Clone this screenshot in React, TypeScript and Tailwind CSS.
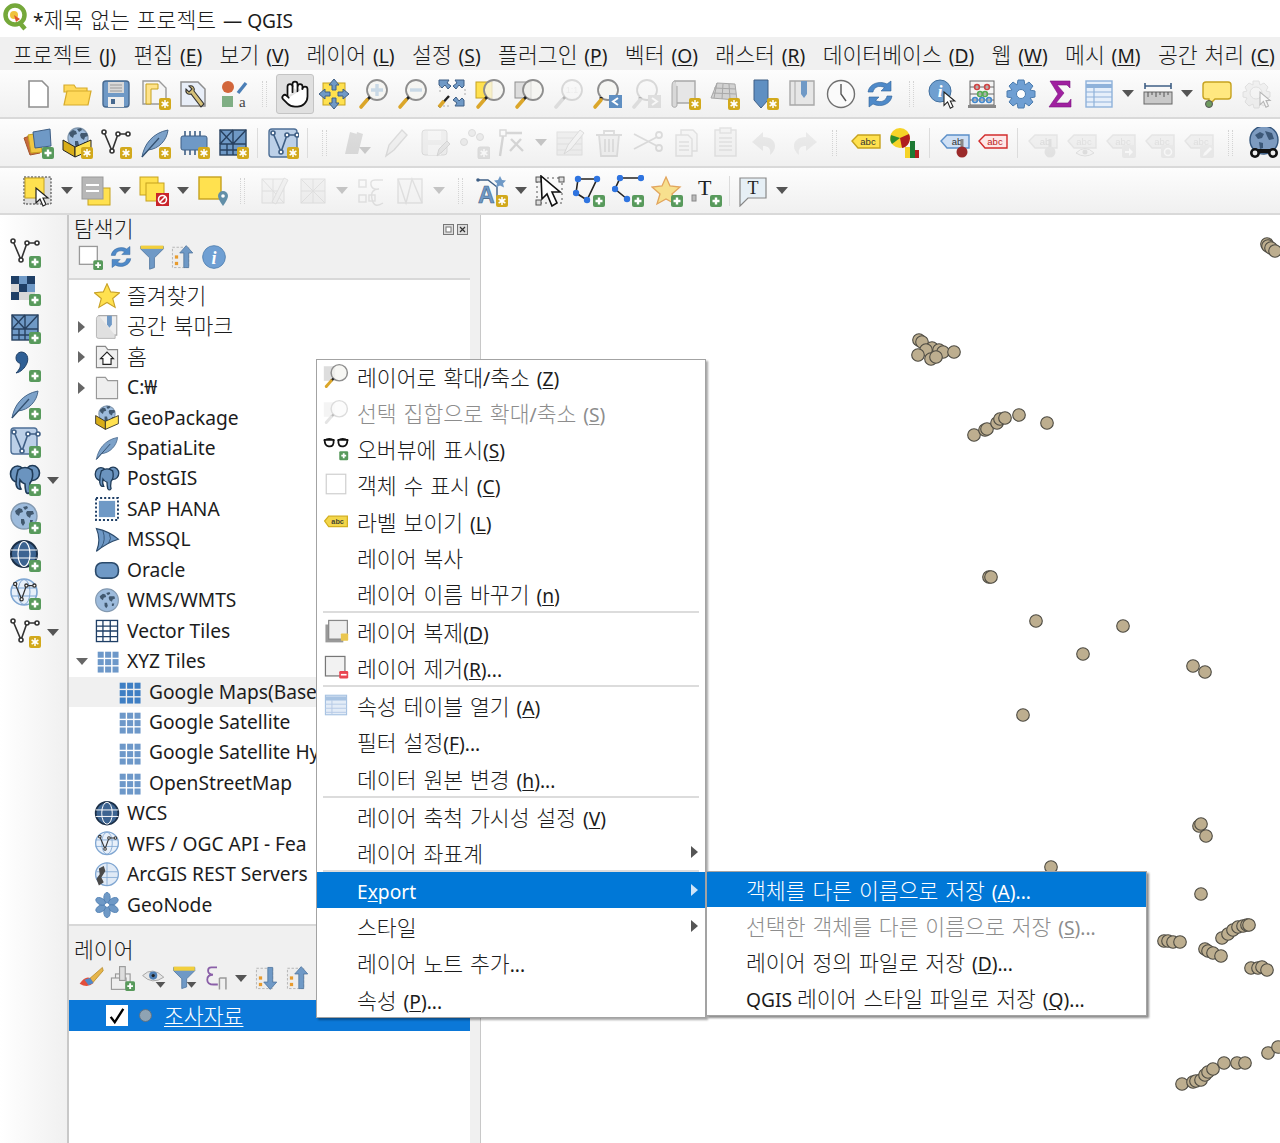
import type { ReactNode } from 'react';
import { Hand } from 'lucide-react';

const BL = '#6f99c6';
const BD = '#3f5f85';
const YL = '#ffe14f';
const YD = '#c6a21f';

const Plus = () => (
  <g>
    <rect x="20" y="20" width="12" height="12" rx="2" fill="#589a5c" />
    <path d="M26 22.5v7M22.5 26h7" stroke="#fff" strokeWidth="2.4" />
  </g>
);
const Star = () => (
  <g>
    <rect x="20" y="20" width="12" height="12" rx="2" fill="#d2a91c" />
    <path d="M26 22v8M22.6 24l6.8 4M22.6 28l6.8-4" stroke="#fff" strokeWidth="1.5" />
  </g>
);
const Mag = ({ children, x = 20, y = 12, r = 10 }: { children?: ReactNode; x?: number; y?: number; r?: number }) => (
  <g>
    {children}
    <circle cx={x} cy={y} r={r} fill="#f4f4f0" fillOpacity=".75" stroke="#8e8e8e" strokeWidth="1.8" />
    <path d={`M${x - r * 0.7} ${y + r * 0.7}L10 22`} stroke="#222" strokeWidth="2.8" />
    <path d="M10 22L4 29" stroke="#dba62a" strokeWidth="3.6" strokeLinecap="round" />
  </g>
);
const Globe = ({ cx = 16, cy = 15, r = 13 }: { cx?: number; cy?: number; r?: number }) => (
  <g>
    <circle cx={cx} cy={cy} r={r} fill="#9dbbdc" stroke="#8399b0" strokeWidth="1.4" />
    <path
      d={`M${cx - 9} ${cy - 5}l4-3 3 1 1 3-3 1-1 3-3-2zM${cx - 1} ${cy - 9}l4-1 1 2-3 2zM${cx + 3} ${cy - 5}l6 0 1 3-3 1-1 3-3-2-1-3zM${cx - 3} ${cy + 3}l3 0 1 4-2 3-2-3zM${cx + 6} ${cy + 4}l3 0-1 3-2 0z`}
      fill="#41586f"
    />
  </g>
);
const VNodes = ({ color = '#333' }: { color?: string }) => (
  <g fill="#fff" stroke={color} strokeWidth="1.6">
    <path d="M4 5L12 24 18 7H28" fill="none" />
    <circle cx="4" cy="5" r="2" />
    <circle cx="12" cy="24" r="2" />
    <circle cx="18" cy="7" r="2" />
    <circle cx="28" cy="7" r="2" />
  </g>
);
const Feather = () => (
  <g>
    <path d="M3 30C5 18 13 6 29 3 28 13 20 22 9 23z" fill="#7da2c9" stroke="#48688c" strokeWidth="1" />
    <path d="M3 30L20 11" stroke="#33506f" strokeWidth="1.2" />
  </g>
);
const Mesh = () => (
  <g fill="none" stroke="#27405f" strokeWidth="1.4">
    <rect x="3" y="3" width="26" height="25" fill={BL} />
    <path d="M3 3l13 14M16 3L3 17M16 3v25M3 17h26M3 23h26M10 17v11M29 3L16 17" />
  </g>
);
const XyzGrid = ({ color = '#6d98c9' }: { color?: string }) => (
  <g fill={color}>
    {[4, 12, 20].map((y) => [4, 12, 20].map((x) => <rect key={`${x}-${y}`} x={x} y={y} width="6.5" height="6.5" />))}
  </g>
);
const Tag = ({ fill, stroke, text = 'abc', color = '#333' }: { fill: string; stroke: string; text?: string; color?: string }) => (
  <g>
    <path d="M2 14L8 8H30V21H8z" fill={fill} stroke={stroke} strokeWidth="1.4" />
    <text x="18" y="18" fontSize="9.5" textAnchor="middle" fill={color} fontFamily="Liberation Sans">
      {text}
    </text>
  </g>
);
const Cursor = ({ x = 0, y = 0, s = 1 }: { x?: number; y?: number; s?: number }) => (
  <path
    transform={`translate(${x} ${y}) scale(${s})`}
    d="M0 0L0 15 4 11 7 18 10 16.5 7 10H12z"
    fill="#fff"
    stroke="#222"
    strokeWidth="1.2"
  />
);
const Elephant = () => (
  <g fill="#6b94bf" stroke="#1f3b58" strokeWidth="1.6">
    <ellipse cx="8.5" cy="10" rx="7" ry="8" />
    <ellipse cx="23.5" cy="9" rx="7" ry="7.5" />
    <path d="M9 6Q16 1 23 6 25 14 21 19 20 25 21 28 19 31 17 28 16 24 16 20 13 19 11 16 10 22 12 25 8 26 7 20 7 12 9 6z" />
  </g>
);

const icons: Record<string, ReactNode> = {
  newFile: <path d="M7 3H20L26 9V29H7z" fill="#fff" stroke="#8f8f8f" strokeWidth="1.6" />,
  open: (
    <g stroke="#d6ab2c" strokeWidth="1.2" fill="#ffd95a">
      <path d="M3 7h10l2 3h11v4H3z" />
      <path d="M3 27L6 13H30L27 27z" />
    </g>
  ),
  save: (
    <g>
      <rect x="3" y="3" width="26" height="26" rx="3" fill={BL} stroke="#47698f" strokeWidth="1.4" />
      <rect x="8" y="4" width="16" height="11" fill="#d9d9d9" />
      <path d="M10 7h12M10 10h12M10 13h12" stroke="#999" />
      <rect x="8" y="19" width="16" height="10" fill="#eee" />
      <rect x="11" y="21" width="4" height="5" fill="#47698f" />
    </g>
  ),
  projProps: (
    <g>
      <path d="M4 3H20L27 10V26H4z" fill="#f5f5f5" stroke="#9a9a9a" strokeWidth="1.4" />
      <path d="M7 6h12v5h-7v15H7z" fill="#ffe38a" stroke="#c6a21f" />
      <Star />
    </g>
  ),
  wrench: (
    <g>
      <path d="M3 4H20L27 11V28H3z" fill="#e8eef8" stroke="#8f8f8f" strokeWidth="1.5" />
      <path d="M11 8C15 7 17 10 16 13L26 26 23 29 13 16C10 17 7 15 8 11L11 14 14 11z" fill="#d7c27a" stroke="#333" strokeWidth="1.1" />
    </g>
  ),
  styleMgr: (
    <g>
      <circle cx="11" cy="9" r="6" fill="#d2663b" />
      <path d="M21 15L29 5" stroke="#4b7fb7" strokeWidth="3.4" />
      <rect x="5" y="18" width="11" height="11" fill="#7fae84" />
      <text x="22" y="29" fontSize="15" fill="#444" fontFamily="Liberation Serif">a</text>
    </g>
  ),
  panSel: (
    <g>
      <rect x="5" y="5" width="22" height="22" fill={YL} stroke={YD} />
      <path
        d="M16 1l5 6h-3v5h-4V7h-3zM16 31l5-6h-3v-5h-4v5h-3zM1 16l6-5v3h5v4H7v3zM31 16l-6-5v3h-5v4h5v3z"
        fill={BL}
        stroke={BD}
      />
    </g>
  ),
  zoomIn: (
    <Mag>
      <path d="M20 6v12M14 12h12" stroke="#4a86c5" strokeWidth="3.4" />
    </Mag>
  ),
  zoomOut: (
    <Mag>
      <path d="M14 12h12" stroke="#4a86c5" strokeWidth="3.4" />
    </Mag>
  ),
  zoomFull: (
    <g>
      <path d="M4 2h10l-2 3 4 3-3 3-3-4-3 3-3-3zM29 2h-9l2 3-4 3 3 3 3-4 3 3 2-2zM29 28h-9l2-3-4-3 3-3 3 4 3-3 2 2z" fill={BL} stroke={BD} />
      <path d="M5 8v8M30 11v8M8 28h8" stroke="#aaa" strokeDasharray="2 2" />
      <path d="M14 18L4 29" stroke="#222" strokeWidth="2.4" />
      <path d="M9 23L4 29" stroke="#dba62a" strokeWidth="3.6" />
    </g>
  ),
  zoomSel: (
    <Mag>
      <rect x="2" y="4" width="16" height="16" fill={YL} stroke={YD} />
    </Mag>
  ),
  zoomLayer: (
    <Mag>
      <rect x="2" y="4" width="16" height="16" fill="#ddd" stroke="#8f8f8f" />
    </Mag>
  ),
  zoom11: (
    <Mag>
      <text x="20" y="15" fontSize="9" textAnchor="middle" fill="#666" fontFamily="Liberation Sans">1:1</text>
    </Mag>
  ),
  zoomLast: (
    <g>
      <Mag x={17} y={12} />
      <rect x="18" y="17" width="13" height="13" fill="#5f8fc2" />
      <path d="M27 20l-5 3.5 5 3.5" fill="none" stroke="#fff" strokeWidth="2" />
    </g>
  ),
  zoomNext: (
    <g>
      <Mag x={17} y={12} />
      <rect x="18" y="17" width="13" height="13" fill="#aaa" />
      <path d="M22 20l5 3.5-5 3.5" fill="none" stroke="#fff" strokeWidth="2" />
    </g>
  ),
  mapNew: (
    <g>
      <path d="M6 3H26V25H6z" fill="#e6e6e6" stroke="#a8a8a8" strokeWidth="1.4" />
      <path d="M6 3C3 3 3 7 3 9V27C3 30 8 30 8 27V8" fill="#d8d8d8" stroke="#a8a8a8" />
      <Star />
    </g>
  ),
  map3d: (
    <g>
      <path d="M9 5L27 6 29 22 3 20z" fill="#d2d2d2" stroke="#a8a8a8" />
      <path d="M9 5L6 20M15 6L14 21M21 6L22 21M6 10L28 11M5 15L28 16" stroke="#a8a8a8" fill="none" />
      <Star />
    </g>
  ),
  bmNew: (
    <g>
      <path d="M7 2H21V22L14 30 7 22z" fill="#5f8fc2" stroke="#3f5f85" />
      <Star />
    </g>
  ),
  bmShow: (
    <g>
      <path d="M4 3H28V27H4z" fill="#e6e6e6" stroke="#a8a8a8" strokeWidth="1.4" />
      <path d="M9 3v24" stroke="#a8a8a8" />
      <path d="M15 3h6v13l-3 4-3-4z" fill="#6f99c6" />
    </g>
  ),
  clock: (
    <g fill="none" stroke="#555">
      <circle cx="16" cy="16" r="13.5" fill="#fafafa" stroke="#707070" strokeWidth="1.4" />
      <path d="M16 6v10l5 7" strokeWidth="1.4" />
    </g>
  ),
  refresh: (
    <g fill="#4f8ac9" stroke="#2f6297" strokeWidth=".6">
      <path d="M4 14C5 6 15 2 23 6L27 3V13H17L20.5 9.5C15 7 10 9 9 14z" />
      <path d="M28 18C27 26 17 30 9 26L5 29V19H15L11.5 22.5C17 25 22 23 23 18z" />
    </g>
  ),
  identify: (
    <g>
      <circle cx="13" cy="13" r="11" fill="#6f9fd0" stroke="#42709f" />
      <text x="13" y="19" fontSize="17" textAnchor="middle" fill="#fff" fontStyle="italic" fontWeight="bold" fontFamily="Liberation Serif">i</text>
      <Cursor x={17} y={14} s={0.9} />
    </g>
  ),
  abacus: (
    <g fill="none" stroke="#666">
      <rect x="4" y="3" width="24" height="24" fill="#f4f4f4" />
      <path d="M4 9h24M4 16h24M4 22h24" />
      <g strokeWidth="1.6">
        <circle cx="11" cy="9" r="2.4" stroke="#c44" />
        <circle cx="21" cy="9" r="2.4" stroke="#c44" />
        <circle cx="14" cy="16" r="2.4" stroke="#5a5" />
        <circle cx="19" cy="16" r="2.4" stroke="#5a5" />
        <circle cx="9" cy="22" r="2.4" stroke="#48c" />
        <circle cx="16" cy="22" r="2.4" stroke="#48c" />
        <circle cx="23" cy="22" r="2.4" stroke="#48c" />
      </g>
      <rect x="2" y="27" width="28" height="3" fill="#888" stroke="none" />
    </g>
  ),
  gear: (
    <g fill="#6f9fd3" stroke="#4c7cae">
      <path d="M13 2h6l1 5 4-3 4 4-3 4 5 1v6l-5 1 3 4-4 4-4-3-1 5h-6l-1-5-4 3-4-4 3-4-5-1v-6l5-1-3-4 4-4 4 3z" />
      <circle cx="16" cy="16" r="4.5" fill="#fff" />
    </g>
  ),
  sigma: <path d="M6 3H26V10L23 7H13L20 15 12 25H24L27 21V29H5L14 16z" fill="#a020a0" stroke="#7a1580" strokeWidth=".6" />,
  table: (
    <g>
      <rect x="3" y="3" width="26" height="26" fill="#e6effa" stroke="#8fb2da" strokeWidth="1.4" />
      <path d="M3 8h26" stroke="#8fb2da" strokeWidth="4" />
      <path d="M3 14h26M3 19h26M3 24h26M11 8v21" stroke="#8fb2da" strokeWidth="1.2" />
    </g>
  ),
  ruler: (
    <g>
      <path d="M3 8h26M3 5v6M29 5v6" stroke="#3f5f85" strokeWidth="1.6" />
      <rect x="2" y="14" width="28" height="12" fill="#c9c9c9" stroke="#666" />
      <path d="M6 14v5M10 14v3M14 14v5M18 14v3M22 14v5M26 14v3" stroke="#555" />
    </g>
  ),
  annot: (
    <g>
      <path d="M5 4H27Q30 4 30 7V18Q30 21 27 21H14L8 27V21H5Q2 21 2 18V7Q2 4 5 4z" fill="#ffe880" stroke="#c6a21f" strokeWidth="1.4" />
      <circle cx="8" cy="26" r="3.5" fill="#6e9a5f" stroke="#555" />
    </g>
  ),
  actions: (
    <g>
      <path d="M13 3h6l1 4 4-2 4 4-2 4 4 1v5l-4 1 2 4-4 4-4-2-1 4h-5l-1-4-4 2-4-4 2-4-4-1v-5l4-1-2-4 4-4 4 2z" fill="#ddd" stroke="#aaa" />
      <circle cx="16" cy="15" r="6" fill="#eee" stroke="#aaa" />
      <Cursor x={20} y={14} s={0.85} />
    </g>
  ),
  dataSrc: (
    <g>
      <path d="M2 11L13 7 18 26 8 28z" fill="#c76b3c" stroke="#a3552c" />
      <path d="M6 8L17 6 20 25 9 26z" fill="#f0c642" stroke="#c6a21f" />
      <path d="M11 5L28 2 29 19 13 21z" fill={BL} stroke={BD} />
      <Plus />
    </g>
  ),
  gpkgNew: (
    <g>
      <Globe cx={17} cy={11} r={10} />
      <path d="M2 13L14 20V30L2 23z" fill="#d8ad19" stroke="#222" strokeWidth="1" />
      <path d="M14 20L30 13V23L14 30z" fill={YL} stroke="#222" strokeWidth="1" />
      <Star />
    </g>
  ),
  shpNew: (
    <g>
      <VNodes />
      <Star />
    </g>
  ),
  splNew: (
    <g>
      <Feather />
      <Star />
    </g>
  ),
  chipNew: (
    <g>
      <rect x="3" y="9" width="26" height="14" rx="2" fill={BL} stroke={BD} />
      <path d="M7 4v5M12 4v5M17 4v5M22 4v5M7 23v5M12 23v5M17 23v5" stroke="#3f5f85" strokeWidth="1.6" />
      <Star />
    </g>
  ),
  meshNew: (
    <g>
      <Mesh />
      <Star />
    </g>
  ),
  virtNew: (
    <g>
      <rect x="2" y="2" width="28" height="28" rx="3" fill="#bcd0e8" stroke="#4e6f96" strokeWidth="1.4" />
      <g transform="translate(2 1)">
        <VNodes color="#3f5f85" />
      </g>
      <Star />
    </g>
  ),
  pencils: (
    <g fill="#999">
      <path d="M4 27L9 5l7 2-4 20z" />
      <path d="M11 27L16 5l6 2-5 20z" />
      <path d="M18 20h12l-6 7z" fill="#666" />
    </g>
  ),
  pencil: <path d="M6 29L9 18 22 3l5 5-13 15z" fill="#ddd" stroke="#999" strokeWidth="1.4" />,
  saveEdit: (
    <g>
      <rect x="3" y="3" width="25" height="25" rx="3" fill="#d8d8d8" stroke="#999" />
      <rect x="9" y="4" width="13" height="9" fill="#eee" />
      <rect x="9" y="18" width="13" height="10" fill="#eee" />
      <path d="M18 29L20 22 28 14l3 3-8 8z" fill="#bbb" stroke="#888" />
    </g>
  ),
  dotsStar: (
    <g fill="#ccc" stroke="#999">
      <circle cx="14" cy="6" r="3.5" />
      <circle cx="6" cy="15" r="3.5" />
      <circle cx="22" cy="10" r="3.5" />
      <Star />
    </g>
  ),
  editTool: (
    <g stroke="#888" fill="none" strokeWidth="1.4">
      <rect x="3" y="3" width="6" height="6" />
      <path d="M9 6h16M6 9L3 29M14 12l12 12M24 12L13 24" strokeWidth="2.4" />
    </g>
  ),
  tablePen: (
    <g>
      <rect x="3" y="5" width="25" height="23" fill="#ddd8c8" stroke="#aaa" />
      <path d="M3 11h25M3 17h25M3 23h25" stroke="#aaa" />
      <path d="M10 27L14 18 26 3l4 3-13 16z" fill="#e8e8e8" stroke="#999" />
    </g>
  ),
  trash: (
    <g fill="none" stroke="#a99" strokeWidth="1.8">
      <path d="M3 8h26M11 8V4h10v4" />
      <path d="M6 8L8 29H24L26 8z" fill="#ddd" />
      <path d="M12 12v13M16 12v13M20 12v13" />
    </g>
  ),
  scissors: (
    <g fill="none" stroke="#999" strokeWidth="1.8">
      <path d="M2 7L25 19M2 22L25 10" />
      <circle cx="27" cy="8" r="3" />
      <circle cx="27" cy="21" r="3" />
    </g>
  ),
  copy: (
    <g fill="#eee" stroke="#aaa" strokeWidth="1.4">
      <path d="M10 3H22L26 7V24H10z" />
      <path d="M5 8H17L21 12V29H5z" />
      <path d="M8 15h10M8 19h10M8 23h10" />
    </g>
  ),
  paste: (
    <g fill="#e6e6e6" stroke="#aaa" strokeWidth="1.4">
      <rect x="5" y="3" width="21" height="26" />
      <rect x="10" y="1" width="11" height="5" />
      <path d="M9 11h13M9 15h13M9 19h13M9 23h13" />
    </g>
  ),
  undo: <path d="M14 5L3 15 14 24V19C20 19 22 22 21 28 29 22 28 10 14 10z" fill="#c8c4bc" />,
  redo: <path d="M18 5L29 15 18 24V19C12 19 10 22 11 28 3 22 4 10 18 10z" fill="#c8ccc4" />,
  tagYellow: <Tag fill="#ffe14f" stroke="#c6a21f" />,
  pie: (
    <g>
      <circle cx="11" cy="11" r="10" fill="#f5d327" />
      <path d="M11 11L20 7A10 10 0 0 1 13 21z" fill="#b01e1e" />
      <path d="M11 11L3 17A10 10 0 0 1 2 8z" fill="#2c8c2c" />
      <rect x="16" y="20" width="5" height="11" fill="#f5d327" />
      <rect x="21" y="14" width="5" height="17" fill="#1d7a34" />
      <rect x="26" y="23" width="4" height="8" fill="#b01e1e" />
    </g>
  ),
  tagPin: (
    <g>
      <Tag fill="#cfe0f5" stroke="#5b8fc8" text="ab" color="#333" />
      <path d="M23 12v10" stroke="#888" strokeWidth="3" />
      <circle cx="23" cy="25" r="5.5" fill="#9b2a2a" />
    </g>
  ),
  tagRed: <Tag fill="#fde8e8" stroke="#d22b2b" color="#b22" />,
  tagPinOff: (
    <g>
      <Tag fill="#ddd" stroke="#bbb" text="ab" color="#999" />
      <path d="M23 12v10" stroke="#aaa" strokeWidth="3" />
      <circle cx="23" cy="25" r="5.5" fill="#bbb" />
    </g>
  ),
  tagEye: (
    <g>
      <Tag fill="#ddd" stroke="#bbb" color="#aaa" />
      <path d="M10 26Q19 17 28 26 19 32 10 26z" fill="#eee" stroke="#aaa" />
      <circle cx="19" cy="25" r="2.5" fill="#aaa" />
    </g>
  ),
  tagMove: (
    <g>
      <Tag fill="#ddd" stroke="#bbb" color="#aaa" />
      <rect x="17" y="18" width="14" height="13" rx="2" fill="#ccc" />
      <path d="M20 24h4v-3l4 4-4 4v-3h-4z" fill="#fff" />
    </g>
  ),
  tagRot: (
    <g>
      <Tag fill="#ddd" stroke="#bbb" color="#aaa" />
      <rect x="17" y="18" width="14" height="13" rx="2" fill="#ccc" />
      <circle cx="24" cy="25" r="3.5" fill="none" stroke="#fff" strokeWidth="1.6" />
    </g>
  ),
  tagEdit: (
    <g>
      <Tag fill="#ddd" stroke="#bbb" color="#aaa" />
      <rect x="17" y="18" width="14" height="13" rx="2" fill="#ccc" />
      <path d="M20 29l1-3 6-6 2 2-6 6z" fill="#fff" />
    </g>
  ),
  globeBino: (
    <g>
      <circle cx="17" cy="13" r="14" fill="#7d9bc0" stroke="#33557c" strokeWidth="1.4" />
      <path d="M8 8l5-3 4 2-2 4-4 1zM18 4l7 2 2 6-5 1-2-4zM12 15l4 1 0 5-3 1z" fill="#3c5878" />
      <path d="M7 22h20v4H7z" fill="#111" />
      <circle cx="8" cy="26" r="5" fill="#111" />
      <circle cx="26" cy="26" r="5" fill="#111" />
      <circle cx="8" cy="26" r="2.4" fill="#eee" />
      <circle cx="26" cy="26" r="2.4" fill="#eee" />
    </g>
  ),
  selBox: (
    <g>
      <rect x="2" y="2" width="27" height="27" fill="#ddd" stroke="#333" strokeDasharray="2 1.5" />
      <rect x="3" y="3" width="19" height="20" fill={YL} stroke={YD} />
      <Cursor x={14} y={13} s={1} />
    </g>
  ),
  attrSel: (
    <g>
      <rect x="8" y="13" width="22" height="17" fill={YL} stroke={YD} />
      <rect x="2" y="2" width="21" height="22" fill="#b7b7b7" stroke="#999" />
      <path d="M6 10h13M6 16h13" stroke="#fff" strokeWidth="2" />
    </g>
  ),
  deselect: (
    <g>
      <rect x="2" y="2" width="18" height="18" fill={YL} stroke={YD} />
      <rect x="8" y="8" width="18" height="18" fill={YL} stroke={YD} />
      <rect x="18" y="18" width="13" height="13" fill="#c9242b" />
      <circle cx="24.5" cy="24.5" r="4" fill="none" stroke="#fff" strokeWidth="1.6" />
      <path d="M21.5 27.5l6-6" stroke="#fff" strokeWidth="1.6" />
    </g>
  ),
  selLoc: (
    <g>
      <rect x="3" y="2" width="22" height="22" fill={YL} stroke={YD} strokeWidth="1.4" />
      <path d="M27 31Q22 24 22 21A5 5 0 0 1 32 21Q32 24 27 31z" fill="#628fa8" />
      <circle cx="27" cy="21" r="1.8" fill="#fff" />
    </g>
  ),
  gridPen: (
    <g stroke="#aaa" fill="#e6e6e6">
      <rect x="4" y="4" width="22" height="24" />
      <path d="M4 4l22 24M4 16h22M15 4v24" fill="none" />
      <path d="M14 27L26 3l4 2-12 24z" fill="#ddd" />
    </g>
  ),
  gridDot: (
    <g stroke="#aaa" fill="#ddd">
      <rect x="4" y="4" width="24" height="24" />
      <path d="M4 4l24 24M28 4L4 28M4 16h24M16 4v24" fill="none" />
    </g>
  ),
  eps: (
    <g stroke="#aaa" fill="none" strokeWidth="1.4">
      <rect x="4" y="5" width="7" height="7" />
      <rect x="4" y="20" width="7" height="7" />
      <rect x="14" y="20" width="6" height="6" />
      <path d="M28 5H20Q15 5 16 10T24 14Q15 14 17 24T28 28" />
    </g>
  ),
  net: (
    <g stroke="#aaa" fill="#eee" strokeWidth="1.4">
      <rect x="4" y="4" width="24" height="24" />
      <path d="M4 4l8 24 6-24 10 24M18 4l-6 24" fill="none" />
    </g>
  ),
  labelTool: (
    <g>
      <text x="2" y="28" fontSize="23" fontWeight="bold" fill={BL} stroke={BD} strokeWidth=".6" fontFamily="Liberation Sans">A</text>
      <path d="M2 5H12L21 12V22" stroke="#3f5f85" strokeWidth="1.4" fill="none" />
      <circle cx="2" cy="5" r="1.8" fill={BD} />
      <path d="M24 1l2 4 4 .5-3 3 1 4-4-2-4 2 1-4-3-3 4-.5z" fill={BL} />
      <Star />
    </g>
  ),
  moveCursor: (
    <g>
      <rect x="3" y="3" width="25" height="25" fill="none" stroke="#555" strokeDasharray="2 3" />
      <rect x="2" y="2" width="5" height="5" fill="#ddd" stroke="#555" />
      <rect x="25" y="2" width="5" height="5" fill="#ddd" stroke="#555" />
      <rect x="2" y="25" width="5" height="5" fill="#ddd" stroke="#555" />
      <path d="M7 1L8 24 13 19 18 31 23 28 18 17H26z" fill="#fff" stroke="#111" strokeWidth="1.6" />
    </g>
  ),
  polyAdd: (
    <g>
      <path d="M5 4H24L14 25 3 18z" fill="none" stroke="#222" strokeWidth="1.6" />
      <g fill="#2f74e0">
        <circle cx="5" cy="4" r="3.2" />
        <circle cx="24" cy="4" r="3.2" />
        <circle cx="14" cy="25" r="3.2" />
        <circle cx="3" cy="18" r="3.2" />
      </g>
      <Plus />
    </g>
  ),
  nodeAdd: (
    <g>
      <path d="M8 3L3 14 15 24M8 3H30" fill="none" stroke="#222" strokeWidth="1.6" />
      <g fill="#2f74e0">
        <circle cx="8" cy="3" r="3.2" />
        <circle cx="3" cy="14" r="3.2" />
        <circle cx="15" cy="24" r="3.2" />
        <circle cx="29" cy="3" r="3.2" />
      </g>
      <Plus />
    </g>
  ),
  starAdd: (
    <g>
      <path d="M15 2l4 9 10 1-8 7 3 10-9-5-9 5 3-10-8-7 10-1z" fill="#f7e08e" stroke="#e2a55d" strokeWidth="1.3" />
      <Plus />
    </g>
  ),
  textAdd: (
    <g>
      <text x="8" y="20" fontSize="22" fill="#222" fontFamily="Liberation Serif">T</text>
      <rect x="2" y="20" width="4" height="6" fill="#bbb" stroke="#888" />
      <Plus />
    </g>
  ),
  textNote: (
    <g>
      <path d="M3 3H29V23H11L3 31z" fill="#e6eff5" stroke="#888" strokeWidth="1.2" />
      <text x="16" y="19" fontSize="18" fill="#222" textAnchor="middle" fontFamily="Liberation Serif">T</text>
    </g>
  ),

  vecPlus: (
    <g>
      <VNodes />
      <Plus />
    </g>
  ),
  checker: (
    <g>
      <rect x="2" y="2" width="24" height="24" fill="#d8d8d8" />
      <g fill="#1f3f66">
        <rect x="2" y="2" width="8" height="8" />
        <rect x="18" y="2" width="8" height="8" />
        <rect x="10" y="10" width="8" height="8" />
        <rect x="2" y="18" width="8" height="8" />
      </g>
      <g fill="#6f99c6">
        <rect x="10" y="2" width="8" height="8" />
        <rect x="18" y="10" width="8" height="8" />
      </g>
      <Plus />
    </g>
  ),
  meshPlus: (
    <g>
      <Mesh />
      <Plus />
    </g>
  ),
  commaPlus: (
    <g>
      <path d="M12 2C18 2 20 8 18 13 16 18 12 22 7 23 11 19 12 16 11 13 6 13 5 3 12 2z" fill="#2f5f95" stroke="#1e3f66" />
      <Plus />
    </g>
  ),
  featherPlus: (
    <g>
      <Feather />
      <Plus />
    </g>
  ),
  virtPlus: (
    <g>
      <rect x="2" y="2" width="26" height="26" rx="3" fill="#bcd0e8" stroke="#4e6f96" strokeWidth="1.4" />
      <g transform="translate(1 1)">
        <VNodes color="#3f5f85" />
      </g>
      <Plus />
    </g>
  ),
  pgPlus: (
    <g>
      <Elephant />
      <Plus />
    </g>
  ),
  wmsPlus: (
    <g>
      <Globe cx={15} cy={14} r={13} />
      <Plus />
    </g>
  ),
  wcsPlus: (
    <g>
      <circle cx="15" cy="14" r="13" fill="#3d6491" stroke="#1b2f47" strokeWidth="2" />
      <ellipse cx="15" cy="14" rx="6" ry="12.5" fill="none" stroke="#fff" strokeWidth="1.2" />
      <path d="M2 10h26M2 18h26" stroke="#fff" strokeWidth="1.2" />
      <Plus />
    </g>
  ),
  wfsPlus: (
    <g>
      <circle cx="15" cy="14" r="13" fill="#e8f0fa" stroke="#7fa6d2" strokeWidth="1.6" />
      <ellipse cx="15" cy="14" rx="6" ry="12.5" fill="none" stroke="#7fa6d2" />
      <path d="M2 10h26M2 18h26" stroke="#7fa6d2" />
      <g transform="translate(3 2) scale(.8)">
        <VNodes />
      </g>
      <Plus />
    </g>
  ),
  vecStar: (
    <g>
      <VNodes />
      <Star />
    </g>
  ),

  addFav: (
    <g>
      <rect x="3" y="3" width="22" height="22" fill="#fff" stroke="#999" strokeWidth="1.6" />
      <Plus />
    </g>
  ),
  funnel: (
    <g>
      <path d="M2 3H30V6L19 17V29L13 31V17L2 6z" fill="#6f99c6" stroke="#4f759f" />
      <rect x="2" y="2" width="28" height="4" fill="#f2cf3c" />
    </g>
  ),
  collapse: (
    <g>
      <rect x="3" y="4" width="20" height="25" fill="#ededed" stroke="#aaa" strokeDasharray="3 2" />
      <rect x="6" y="14" width="4" height="4" fill="#e89b2d" />
      <rect x="6" y="22" width="4" height="4" fill="#e89b2d" />
      <path d="M20 2l8 9h-5v18h-6V11h-5z" fill="#6f99c6" stroke="#4f759f" />
    </g>
  ),
  expand: (
    <g>
      <rect x="3" y="4" width="20" height="25" fill="#ededed" stroke="#aaa" strokeDasharray="3 2" />
      <rect x="6" y="14" width="4" height="4" fill="#e89b2d" />
      <rect x="6" y="22" width="4" height="4" fill="#e89b2d" />
      <path d="M20 30l8-9h-5V3h-6v18h-5z" fill="#6f99c6" stroke="#4f759f" />
    </g>
  ),
  info: (
    <g>
      <circle cx="16" cy="16" r="14" fill="#6f9fd3" stroke="#4c7cae" />
      <text x="16" y="24" fontSize="22" fill="#fff" textAnchor="middle" fontStyle="italic" fontWeight="bold" fontFamily="Liberation Serif">i</text>
    </g>
  ),
  brush: (
    <g>
      <path d="M30 3L14 17 18 22 31 7z" fill="#e6b54a" stroke="#b88d2f" />
      <path d="M2 23Q9 13 15 16L19 22Q12 29 2 23z" fill="#e24f3c" />
      <path d="M8 18L15 16 19 22 13 25z" fill="#4f8ac9" />
    </g>
  ),
  addGroup: (
    <g fill="#eee" stroke="#999" strokeWidth="1.4">
      <rect x="8" y="11" width="18" height="16" />
      <rect x="3" y="16" width="18" height="14" />
      <rect x="13" y="2" width="7" height="17" fill="#ddd" />
      <g stroke="none">
        <Plus />
      </g>
    </g>
  ),
  eye: (
    <g>
      <path d="M2 13Q14 1 28 15 14 25 2 13z" fill="#e6e6e6" stroke="#999" />
      <circle cx="15" cy="13" r="5" fill="#4f7fb3" />
      <circle cx="15" cy="13" r="2" fill="#222" />
      <path d="M18 21h12l-6 7z" fill="#555" />
    </g>
  ),
  funnelDrop: (
    <g>
      <path d="M2 3H28V7L18 17V27L12 29V17L2 7z" fill="#6f99c6" stroke="#4f759f" />
      <rect x="2" y="2" width="26" height="5" fill="#f2cf3c" />
      <path d="M18 21h12l-6 7z" fill="#555" />
    </g>
  ),
  epsFilter: (
    <g>
      <path d="M16 3H9Q5 3 5 7T11 12Q4 12 4 18T12 24H17" fill="none" stroke="#8a5fa8" strokeWidth="2.2" />
      <path d="M19 16h8v14M19 16v14" fill="none" stroke="#999" strokeWidth="1.8" />
    </g>
  ),

  star: <path d="M16 1l4.500 10 11 1-8.500 7 3 11-10-6-10 6 3-11L.5 12l11-1z" fill="#ffe14f" stroke="#c9a227" strokeWidth="1.4" />,
  book: (
    <g>
      <path d="M6 2H28V26H6z" fill="#eee" stroke="#aaa" strokeWidth="1.4" />
      <path d="M6 2C3 3 3 5 3 7V28Q3 30 6 30H26V26" fill="#e0e0e0" stroke="#aaa" />
      <path d="M16 2h6v11l-3 4-3-4z" fill="#6f99c6" />
    </g>
  ),
  home: (
    <g fill="#eee" stroke="#888" strokeWidth="1.4">
      <path d="M3 3H14L17 7H29V29H3z" />
      <path d="M8 18L16 10 24 18H21V25H11V18z" fill="#fff" stroke="#222" />
    </g>
  ),
  folder: <path d="M3 3H14L17 7H29V29H3z" fill="#eee" stroke="#999" strokeWidth="1.4" />,
  gpkg: (
    <g>
      <Globe cx={16} cy={11} r={10} />
      <path d="M2 13L14 20V30L2 23z" fill="#d8ad19" stroke="#222" strokeWidth="1" />
      <path d="M14 20L30 13V23L14 30z" fill={YL} stroke="#222" strokeWidth="1" />
    </g>
  ),
  feather: <Feather />,
  pg: <Elephant />,
  hana: (
    <g>
      <rect x="6" y="6" width="20" height="20" fill={BL} />
      <rect x="2.5" y="2.5" width="27" height="27" fill="none" stroke="#1f3f66" strokeWidth="2.4" strokeDasharray="2.5 2.5" />
    </g>
  ),
  mssql: (
    <g>
      <path d="M3 2Q18 5 30 15 16 19 3 30 9 16 3 2z" fill="#6f99c6" stroke="#2b4a6b" strokeWidth="1.4" />
      <path d="M11 5Q15 16 9 25M19 9Q22 14 18 20" fill="none" stroke="#2b4a6b" />
    </g>
  ),
  oracle: <rect x="2" y="7" width="28" height="19" rx="8" fill={BL} stroke="#2b4a6b" strokeWidth="2" />,
  wms: <Globe cx={16} cy={15} r={14} />,
  vt: (
    <g fill="#fff" stroke="#1f3f66" strokeWidth="1.6">
      <rect x="3" y="3" width="26" height="26" />
      <path d="M3 10h26M3 16h26M3 23h26M11 3v26M20 3v26" fill="none" />
    </g>
  ),
  xyz: (
    <g transform="scale(1.14)">
      <XyzGrid />
    </g>
  ),
  xyzDark: (
    <g transform="scale(1.14)">
      <XyzGrid color="#3f7fc4" />
    </g>
  ),
  wcs: (
    <g>
      <circle cx="16" cy="15" r="14" fill="#3d6491" stroke="#1b2f47" strokeWidth="2" />
      <ellipse cx="16" cy="15" rx="6.5" ry="13.5" fill="none" stroke="#fff" strokeWidth="1.2" />
      <path d="M2 11h28M2 19h28" stroke="#fff" strokeWidth="1.2" />
    </g>
  ),
  wfs: (
    <g>
      <circle cx="16" cy="15" r="14" fill="#e8f0fa" stroke="#7fa6d2" strokeWidth="1.6" />
      <ellipse cx="16" cy="15" rx="6.5" ry="13.5" fill="none" stroke="#7fa6d2" />
      <path d="M2 11h28M2 19h28" stroke="#7fa6d2" />
      <g transform="translate(4 3) scale(.8)">
        <VNodes />
      </g>
    </g>
  ),
  arcgis: (
    <g>
      <circle cx="16" cy="15" r="14" fill="#e0eaf6" stroke="#7fa6d2" strokeWidth="1.6" />
      <path d="M3 12h26M3 19h26M16 1v28" stroke="#7fa6d2" />
      <path d="M6 8l6-3 2 6-5 8 3 6-6 4-3-8 4-6z" fill="#4a4a4a" />
    </g>
  ),
  geonode: (
    <g stroke="#4f7fb3" strokeWidth="1" fill="#6f99c6">
      {[0, 60, 120, 180, 240, 300].map((a) => (
        <ellipse key={a} cx="16" cy="7" rx="4" ry="6.5" transform={`rotate(${a} 16 16)`} />
      ))}
    </g>
  ),

  menuZoom: (
    <Mag>
      <rect x="1" y="4" width="14" height="18" fill="#ddd" />
    </Mag>
  ),
  glasses: (
    <g>
      <path d="M1 7Q8 2 14 7M18 7Q24 2 31 7" fill="none" stroke="#111" strokeWidth="1.6" />
      <path d="M2 6H13Q14 15 7 14 2 13 2 6zM19 6H30Q30 13 25 14 18 15 19 6z" fill="#fff" stroke="#111" strokeWidth="2.2" />
      <rect x="20" y="20" width="11" height="11" rx="1.5" fill="#589a5c" />
      <path d="M25.5 22.5v6M22.5 25.5h6" stroke="#fff" strokeWidth="2.2" />
    </g>
  ),
  box: <rect x="4" y="4" width="24" height="24" fill="#fff" stroke="#d0d0d0" strokeWidth="1.5" />,
  tagSmall: (
    <g>
      <path d="M2 16L7 10H30V23H7z" fill="#f3d64a" stroke="#d3af1f" strokeWidth="1.5" />
      <text x="18" y="20" fontSize="9" fontWeight="bold" textAnchor="middle" fill="#443" fontFamily="Liberation Sans">abc</text>
    </g>
  ),
  dup: (
    <g>
      <rect x="3" y="8" width="22" height="22" fill="#999" />
      <rect x="7" y="3" width="23" height="23" fill="#eee" stroke="#888" strokeWidth="1.5" />
      <rect x="22" y="19" width="9" height="9" rx="1" fill="#eac64e" />
    </g>
  ),
  remove: (
    <g>
      <rect x="3" y="3" width="24" height="24" fill="#f2f2f2" stroke="#777" strokeWidth="1.5" />
      <rect x="20" y="21" width="11" height="9" rx="1.5" fill="#ea4550" />
      <rect x="22" y="24.5" width="7" height="2" fill="#fff" />
    </g>
  ),
  tableMenu: (
    <g>
      <rect x="3" y="4" width="26" height="24" fill="#e3ecf7" stroke="#a8c3e2" strokeWidth="1.4" />
      <path d="M3 8h26" stroke="#a8c3e2" strokeWidth="5" />
      <path d="M3 15h26M3 20h26M3 25h26M11 10v18" stroke="#b6cbe5" strokeWidth="1.2" />
    </g>
  ),
};

function Icon({ name, size = 32, muted = false }: { name: string; size?: number; muted?: boolean }) {
  return (
    <svg viewBox="0 0 32 32" width={size} height={size} className={muted ? 'flex-none opacity-30 grayscale' : 'flex-none'}>
      {icons[name]}
    </svg>
  );
}

function Tool({ name, muted, w = 'w-[39px]' }: { name: string; muted?: boolean; w?: string }) {
  return (
    <div className={`flex h-full flex-none items-center justify-center ${w}`}>
      <Icon name={name} muted={muted} />
    </div>
  );
}

function Arrow({ muted, w = 'w-[19px]' }: { muted?: boolean; w?: string }) {
  return (
    <div className={`flex h-full flex-none items-center justify-center ${w}`}>
      <div
        className={`h-0 w-0 border-x-[6.5px] border-t-[7px] border-x-transparent ${
          muted ? 'border-t-[#c4c4c4]' : 'border-t-[#555555]'
        }`}
      />
    </div>
  );
}

function Grip({ w, at = 'justify-center' }: { w: string; at?: string }) {
  return (
    <div className={`flex h-full flex-none items-center ${w} ${at}`}>
      <div className="h-[26px] w-[5px] border-x border-dotted border-[#d4d4d4]" />
    </div>
  );
}

function Sep({ w }: { w: string }) {
  return (
    <div className={`flex h-full flex-none items-center justify-center ${w}`}>
      <div className="h-[30px] w-px bg-[#dcdcdc]" />
    </div>
  );
}

function Bar({ children, className }: { children: ReactNode; className: string }) {
  return (
    <div
      className={`flex flex-none items-center border-b-2 border-[#d9d9d9] bg-gradient-to-b from-[#fdfdfd] to-[#f0f0f0] pl-[18px] ${className}`}
    >
      {children}
    </div>
  );
}

// Qt-style label: "&X" underlines X, hangul runs get a larger size to match Malgun Gothic's width
function Label({ text }: { text: string }) {
  const parts = text.split(/(&.|[가-힣][가-힣 ]*)/).filter(Boolean);
  return (
    <span className="whitespace-pre">
      {parts.map((p, i) => {
        if (p[0] === '&') {
          return (
            <span key={i} className="underline underline-offset-2">
              {p[1]}
            </span>
          );
        }
        if (/[가-힣]/.test(p)) {
          return (
            <span key={i} className="text-[21.6px] font-light [word-spacing:1.2px]">
              {p}
            </span>
          );
        }
        return <span key={i}>{p}</span>;
      })}
    </span>
  );
}

const menuBar = [
  '프로젝트 (&J)',
  '편집 (&E)',
  '보기 (&V)',
  '레이어 (&L)',
  '설정 (&S)',
  '플러그인 (&P)',
  '벡터 (&O)',
  '래스터 (&R)',
  '데이터베이스 (&D)',
  '웹 (&W)',
  '메시 (&M)',
  '공간 처리 (&C)',
];

const treeRows: { label: string; icon: string; arrow?: 'right' | 'down'; child?: boolean; hover?: boolean }[] = [
  { label: '즐겨찾기', icon: 'star' },
  { label: '공간 북마크', icon: 'book', arrow: 'right' },
  { label: '홈', icon: 'home', arrow: 'right' },
  { label: 'C:₩', icon: 'folder', arrow: 'right' },
  { label: 'GeoPackage', icon: 'gpkg' },
  { label: 'SpatiaLite', icon: 'feather' },
  { label: 'PostGIS', icon: 'pg' },
  { label: 'SAP HANA', icon: 'hana' },
  { label: 'MSSQL', icon: 'mssql' },
  { label: 'Oracle', icon: 'oracle' },
  { label: 'WMS/WMTS', icon: 'wms' },
  { label: 'Vector Tiles', icon: 'vt' },
  { label: 'XYZ Tiles', icon: 'xyz', arrow: 'down' },
  { label: 'Google Maps(Base', icon: 'xyzDark', child: true, hover: true },
  { label: 'Google Satellite', icon: 'xyz', child: true },
  { label: 'Google Satellite Hy', icon: 'xyz', child: true },
  { label: 'OpenStreetMap', icon: 'xyz', child: true },
  { label: 'WCS', icon: 'wcs' },
  { label: 'WFS / OGC API - Fea', icon: 'wfs' },
  { label: 'ArcGIS REST Servers', icon: 'arcgis' },
  { label: 'GeoNode', icon: 'geonode' },
];

function TreeRow({ row }: { row: (typeof treeRows)[number] }) {
  return (
    <div className={`flex h-[30.45px] items-center whitespace-nowrap pl-[6px] ${row.hover ? 'bg-[#f0f0f0]' : ''}`}>
      <div className="flex w-[13px] flex-none justify-center">
        {row.arrow === 'right' && <div className="h-0 w-0 border-y-[6px] border-l-[7px] border-y-transparent border-l-[#666666]" />}
        {row.arrow === 'down' && <div className="h-0 w-0 border-x-[6.5px] border-t-[7px] border-x-transparent border-t-[#666666]" />}
      </div>
      <div className={`flex flex-none ${row.child ? 'ml-[28px]' : 'ml-[6px]'}`}>
        <Icon name={row.icon} size={26} />
      </div>
      <span className="ml-[7px]">
        <Label text={row.label} />
      </span>
    </div>
  );
}

const mapPoints = [
  [919, 340], [922, 342], [932, 348], [926, 350], [939, 350], [943, 352], [954, 352], [931, 359], [918, 355], [936, 357],
  [974, 435], [985, 430], [987, 429], [997, 423], [1000, 419], [1005, 418], [1019, 415], [1047, 423],
  [1267, 244], [1268, 246], [1271, 248], [1275, 251],
  [989, 577], [991, 577], [1036, 621], [1123, 626], [1083, 654], [1193, 666], [1205, 672], [1023, 715],
  [1199, 826], [1201, 824], [1206, 836], [1051, 867], [1201, 894],
  [1164, 941], [1168, 941], [1173, 942], [1180, 942],
  [1222, 938], [1228, 934], [1233, 930], [1238, 927], [1243, 926], [1247, 925], [1249, 925],
  [1205, 949], [1208, 951], [1213, 953], [1221, 956],
  [1251, 968], [1258, 968], [1262, 967], [1267, 970],
  [1182, 1084], [1193, 1082], [1196, 1081], [1201, 1080], [1205, 1075], [1208, 1072], [1213, 1069], [1224, 1063], [1237, 1063], [1245, 1063], [1268, 1053], [1278, 1047],
];

type MenuRow = { icon?: string; text: string; muted?: boolean; hi?: boolean; sub?: boolean } | 'sep';

const ctxMenu: MenuRow[] = [
  { icon: 'menuZoom', text: '레이어로 확대/축소 (&Z)' },
  { icon: 'menuZoom', muted: true, text: '선택 집합으로 확대/축소 (&S)' },
  { icon: 'glasses', text: '오버뷰에 표시(&S)' },
  { icon: 'box', text: '객체 수 표시 (&C)' },
  { icon: 'tagSmall', text: '라벨 보이기 (&L)' },
  { text: '레이어 복사' },
  { text: '레이어 이름 바꾸기 (&n)' },
  'sep',
  { icon: 'dup', text: '레이어 복제(&D)' },
  { icon: 'remove', text: '레이어 제거(&R)...' },
  'sep',
  { icon: 'tableMenu', text: '속성 테이블 열기 (&A)' },
  { text: '필터 설정(&F)...' },
  { text: '데이터 원본 변경 (&h)...' },
  'sep',
  { text: '레이어 축척 가시성 설정 (&V)' },
  { text: '레이어 좌표계', sub: true },
  'sep',
  { text: 'E&xport', hi: true, sub: true },
  { text: '스타일', sub: true },
  { text: '레이어 노트 추가...' },
  { text: '속성 (&P)...' },
];

function CtxRow({ row }: { row: Exclude<MenuRow, 'sep'> }) {
  return (
    <div
      className={`relative flex h-[36.17px] items-center pl-[40px] pt-[4px] whitespace-nowrap ${
        row.hi ? 'bg-[#0078d7] text-white' : row.muted ? 'text-[#8d8d8d]' : ''
      }`}
    >
      {row.icon && (
        <div className="absolute left-[6px] top-[5px]">
          <Icon name={row.icon} size={26} muted={row.muted} />
        </div>
      )}
      <Label text={row.text} />
      {row.sub && (
        <div
          className={`absolute right-[7px] top-[12px] h-0 w-0 border-y-[6px] border-l-[7px] border-y-transparent ${
            row.hi ? 'border-l-[#cfe4f7]' : 'border-l-[#555555]'
          }`}
        />
      )}
    </div>
  );
}

export default function App() {
  return (
    <div className="relative flex h-[1143px] w-[1280px] flex-col overflow-hidden bg-[#f0f0f0] font-['Noto_Sans','Noto_Sans_CJK_KR',sans-serif] text-[19.2px] text-[#1c1c1c]">
      {/* title */}
      <div className="flex h-[37px] flex-none items-center bg-white pl-[2px] pt-[3px]">
        <svg viewBox="0 0 28 28" width="28" height="28" className="flex-none -translate-y-[3px]">
          <circle cx="13" cy="12" r="9.5" fill="none" stroke="#75a83a" strokeWidth="4.5" />
          <path d="M17 19l6 7" stroke="#75a83a" strokeWidth="4.5" />
          <circle cx="12" cy="12" r="4" fill="#f0c33c" />
          <path d="M12 12l6 4-4 3z" fill="#e0552f" />
        </svg>
        <span className="ml-[3px]">
          <Label text="*제목 없는 프로젝트 — QGIS" />
        </span>
      </div>

      {/* menu bar */}
      <div className="flex h-[33px] flex-none items-center gap-[17.4px] pl-[13px] pt-[3px] whitespace-nowrap">
        {menuBar.map((m) => (
          <Label key={m} text={m} />
        ))}
      </div>

      <Bar className="h-[49px]">
        {['newFile', 'open', 'save', 'projProps', 'wrench', 'styleMgr'].map((n) => (
          <Tool key={n} name={n} />
        ))}
        <Grip w="w-[24px]" />
        <div className="flex h-[40px] w-[38px] flex-none items-center justify-center rounded-[3px] border border-[#c4c4c4] bg-[#e0e0e0]">
          <Hand size={30} strokeWidth={1.4} fill="#fff" color="#111" />
        </div>
        {['panSel', 'zoomIn', 'zoomOut', 'zoomFull', 'zoomSel', 'zoomLayer'].map((n) => (
          <Tool key={n} name={n} />
        ))}
        <Tool name="zoom11" muted />
        <Tool name="zoomLast" />
        <Tool name="zoomNext" muted />
        <Tool name="mapNew" />
        <Tool name="map3d" />
        <Tool name="bmNew" />
        <Tool name="bmShow" />
        <Tool name="clock" />
        <Tool name="refresh" />
        <Grip w="w-[24px]" />
        {['identify', 'abacus', 'gear', 'sigma', 'table'].map((n) => (
          <Tool key={n} name={n} />
        ))}
        <Arrow w="w-[20px]" />
        <Tool name="ruler" />
        <Arrow w="w-[20px]" />
        <Tool name="annot" />
        <Tool name="actions" muted />
      </Bar>

      <Bar className="h-[49px]">
        {['dataSrc', 'gpkgNew', 'shpNew', 'splNew', 'chipNew', 'meshNew'].map((n) => (
          <Tool key={n} name={n} />
        ))}
        <Sep w="w-[11px]" />
        <Tool name="virtNew" />
        <Sep w="w-[10px]" />
        <Grip w="w-[25px]" />
        {['pencils', 'pencil', 'saveEdit', 'dotsStar', 'editTool'].map((n) => (
          <Tool key={n} name={n} muted />
        ))}
        <Arrow muted w="w-[18px]" />
        {['tablePen', 'trash', 'scissors', 'copy', 'paste', 'undo', 'redo'].map((n) => (
          <Tool key={n} name={n} muted />
        ))}
        <Grip w="w-[23px]" />
        <Tool name="tagYellow" />
        <Tool name="pie" />
        <Sep w="w-[11px]" />
        <Tool name="tagPin" />
        <Tool name="tagRed" w="w-[37px]" />
        <Sep w="w-[12px]" />
        {['tagPinOff', 'tagEye', 'tagMove', 'tagRot', 'tagEdit'].map((n) => (
          <Tool key={n} name={n} muted />
        ))}
        <Grip w="w-[25px]" />
        <Tool name="globeBino" />
      </Bar>

      <Bar className="h-[47px]">
        <Tool name="selBox" />
        <Arrow />
        <Tool name="attrSel" />
        <Arrow />
        <Tool name="deselect" />
        <Arrow />
        <Tool name="selLoc" />
        <Grip w="w-[23px]" />
        <Tool name="gridPen" muted />
        <Tool name="gridDot" muted />
        <Arrow muted />
        <Tool name="eps" muted />
        <Tool name="net" muted />
        <Arrow muted />
        <Grip w="w-[24px]" />
        <Tool name="labelTool" />
        <Arrow />
        {['moveCursor', 'polyAdd', 'nodeAdd', 'starAdd', 'textAdd'].map((n) => (
          <Tool key={n} name={n} />
        ))}
        <Sep w="w-[8px]" />
        <Tool name="textNote" />
        <Arrow />
      </Bar>

      {/* main */}
      <div className="flex min-h-0 flex-1">
        {/* side toolbar */}
        <div className="flex w-[69px] flex-none flex-col border-r-2 border-[#c8c8c8] bg-gradient-to-r from-white to-[#f0f0f0] pt-[18px]">
          {['vecPlus', 'checker', 'meshPlus', 'commaPlus', 'featherPlus', 'virtPlus', 'pgPlus', 'wmsPlus', 'wcsPlus', 'wfsPlus', 'vecStar'].map((n) => (
            <div key={n} className="flex h-[38px] items-center pl-[9px]">
              <Icon name={n} />
              {(n === 'pgPlus' || n === 'vecStar') && <Arrow w="w-[24px]" />}
            </div>
          ))}
        </div>

        {/* browser and layers */}
        <div className="flex w-[401px] flex-none flex-col">
          <div className="flex h-[28px] flex-none items-center justify-between pl-[5px] pr-[2px]">
            <Label text="탐색기" />
            <div className="flex gap-[3px]">
              <svg viewBox="0 0 11 11" width="11" height="11">
                <rect x=".5" y=".5" width="10" height="10" fill="#ddd" stroke="#777" />
                <rect x="3" y="3" width="5" height="5" fill="#fff" stroke="#777" />
              </svg>
              <svg viewBox="0 0 11 11" width="11" height="11">
                <rect x=".5" y=".5" width="10" height="10" fill="#ddd" stroke="#777" />
                <path d="M3 3l5 5M8 3L3 8" stroke="#333" strokeWidth="1.2" />
              </svg>
            </div>
          </div>
          <div className="flex h-[35px] flex-none items-start pl-[5px] pt-[1px]">
            {['addFav', 'refresh', 'funnel', 'collapse', 'info'].map((n) => (
              <div key={n} className="flex w-[31px] justify-center">
                <Icon name={n} size={26} />
              </div>
            ))}
          </div>
          <div className="h-[648px] flex-none overflow-hidden border-y-2 border-[#d8d8d8] bg-white pt-[1px]">
            {treeRows.map((row) => (
              <TreeRow key={row.label} row={row} />
            ))}
          </div>
          <div className="flex h-[37px] flex-none items-end pl-[5px] leading-[24px]">
            <Label text="레이어" />
          </div>
          <div className="flex h-[37px] flex-none items-start pl-[6px] pt-[2px]">
            {['brush', 'addGroup', 'eye', 'funnelDrop', 'epsFilter'].map((n) => (
              <div key={n} className="flex w-[31.5px] justify-center">
                <Icon name={n} size={26} />
              </div>
            ))}
            <div className="h-[26px]">
              <Arrow w="w-[16px]" />
            </div>
            <div className="ml-[3px] flex w-[31px] justify-center">
              <Icon name="expand" size={26} />
            </div>
            <div className="flex w-[31px] justify-center">
              <Icon name="collapse" size={26} />
            </div>
          </div>
          <div className="flex-1 bg-white">
            <div className="flex h-[31px] items-center bg-[#0b78d8] pl-[37px] text-white">
              <div className="flex h-[21px] w-[22px] flex-none items-center justify-center bg-white">
                <svg viewBox="0 0 20 20" width="18" height="18">
                  <path d="M3 11l4.5 6L17 2" fill="none" stroke="#000" strokeWidth="2.6" />
                </svg>
              </div>
              <div className="ml-[11px] h-[13px] w-[13px] flex-none rounded-full border border-[#5d7285] bg-[#8fa3b3]" />
              <span className="ml-[12px] pt-[1px] underline underline-offset-2">
                <Label text="조사자료" />
              </span>
            </div>
          </div>
        </div>

        <div className="w-[10px] flex-none" />

        {/* map canvas */}
        <div className="min-w-0 flex-1 border-l border-[#c8c8c8] bg-white">
          <svg viewBox="481 215 799 928" className="h-full w-full">
            {mapPoints.map(([x, y], i) => (
              <circle key={i} cx={x} cy={y} r="6.3" fill="#bdae8f" stroke="#4c4a42" strokeWidth="1.1" />
            ))}
          </svg>
        </div>
      </div>

      {/* context menu */}
      <div className="absolute left-[316px] top-[359px] w-[390px] border border-[#a3a3a3] bg-white shadow-[2px_2px_2px_rgba(0,0,0,0.35)]">
        <div className="-mt-[2px]">
          {ctxMenu.map((row, i) =>
            row === 'sep' ? (
              <div key={i} className="mx-[6px] h-[2px] bg-[#dcdcdc]" />
            ) : (
              <CtxRow key={i} row={row} />
            ),
          )}
        </div>
      </div>

      {/* export submenu */}
      <div className="absolute left-[706px] top-[871px] w-[441px] border border-[#a3a3a3] bg-white shadow-[2px_2px_2px_rgba(0,0,0,0.45)] whitespace-nowrap">
        <div className="flex h-[35px] items-center bg-[#0078d7] pl-[39px] pt-[3px] text-white">
          <Label text="객체를 다른 이름으로 저장 (&A)..." />
        </div>
        <div className="flex h-[36px] items-center pl-[39px] pt-[4px] text-[#8d8d8d]">
          <Label text="선택한 객체를 다른 이름으로 저장 (&S)..." />
        </div>
        <div className="flex h-[36px] items-center pl-[39px] pt-[5px]">
          <Label text="레이어 정의 파일로 저장 (&D)..." />
        </div>
        <div className="flex h-[36px] items-center pl-[39px] pt-[4px]">
          <Label text="QGIS 레이어 스타일 파일로 저장 (&Q)..." />
        </div>
      </div>
    </div>
  );
}
